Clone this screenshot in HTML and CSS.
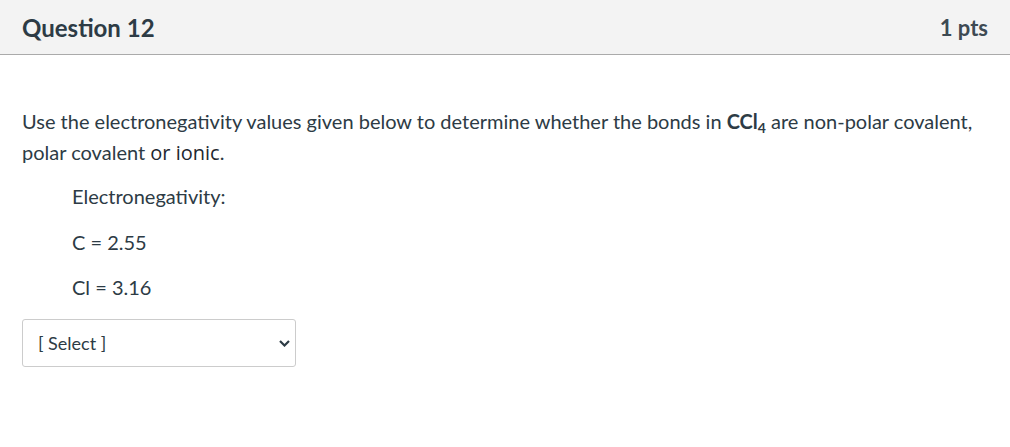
FILE: index.html
```html
<!DOCTYPE html>
<html>
<head>
<meta charset="utf-8">
<link rel="stylesheet" href="styles.css">
</head>
<body>
<div class="question">
  <div class="header">
    <h2 class="title">Question 12</h2>
    <div class="pts">1 pts</div>
  </div>
  <div class="content">
    <p class="text">Use the electronegativity values given below to determine whether the bonds in <strong>CCl<sub>4</sub></strong> are non-polar covalent, polar covalent <span class="alt">or ionic</span>.</p>
    <div class="values">
      <p>Electronegativity:</p>
      <p>C = 2.55</p>
      <p>Cl = 3.16</p>
    </div>
    <div class="select">
      <span class="select-label">[ Select ]</span>
      <svg class="chev" width="11" height="7" viewBox="0 0 11 7"><path d="M1 1 L5.5 5.5 L10 1" fill="none" stroke="#2d3b45" stroke-width="2.2"/></svg>
    </div>
  </div>
</div>
</body>
</html>
```
FILE: styles.css
```css
html, body { margin: 0; padding: 0; background: #fff; }
body { font-family: Lato, "Liberation Sans", sans-serif; color: #2d3b45; }
.header {
  display: flex; justify-content: space-between; align-items: center;
  height: 54px; background: #f3f3f3; border-bottom: 1px solid #aaaaaa;
  padding: 0 22px;
}
.title { margin: 0; font-size: 24px; font-weight: 700; }
.pts { font-size: 22px; font-weight: 700; color: #3d4a53; }
.content { padding: 51px 22px 0; }
.text { margin: 0; font-size: 20px; line-height: 31px; }
.text strong { font-weight: 700; }
.text sub { font-size: 14px; vertical-align: -4px; line-height: 0; }
.alt { font-family: "Open Sans", sans-serif; font-size: 20px; color: #1e2830; }
.values { padding-left: 50px; margin-top: 5px; }
.values p { margin: 0; font-size: 20px; line-height: 46px; }
.values p:last-child { line-height: 44px; }
.select {
  margin-top: 10px; height: 46px; border: 1px solid #cccccc; border-radius: 3px;
  display: flex; align-items: center; justify-content: space-between; padding: 0 5px 0 15px;
  width: 252px;
}
.select-label { font-size: 18px; }
.chev { display: block; }
```
